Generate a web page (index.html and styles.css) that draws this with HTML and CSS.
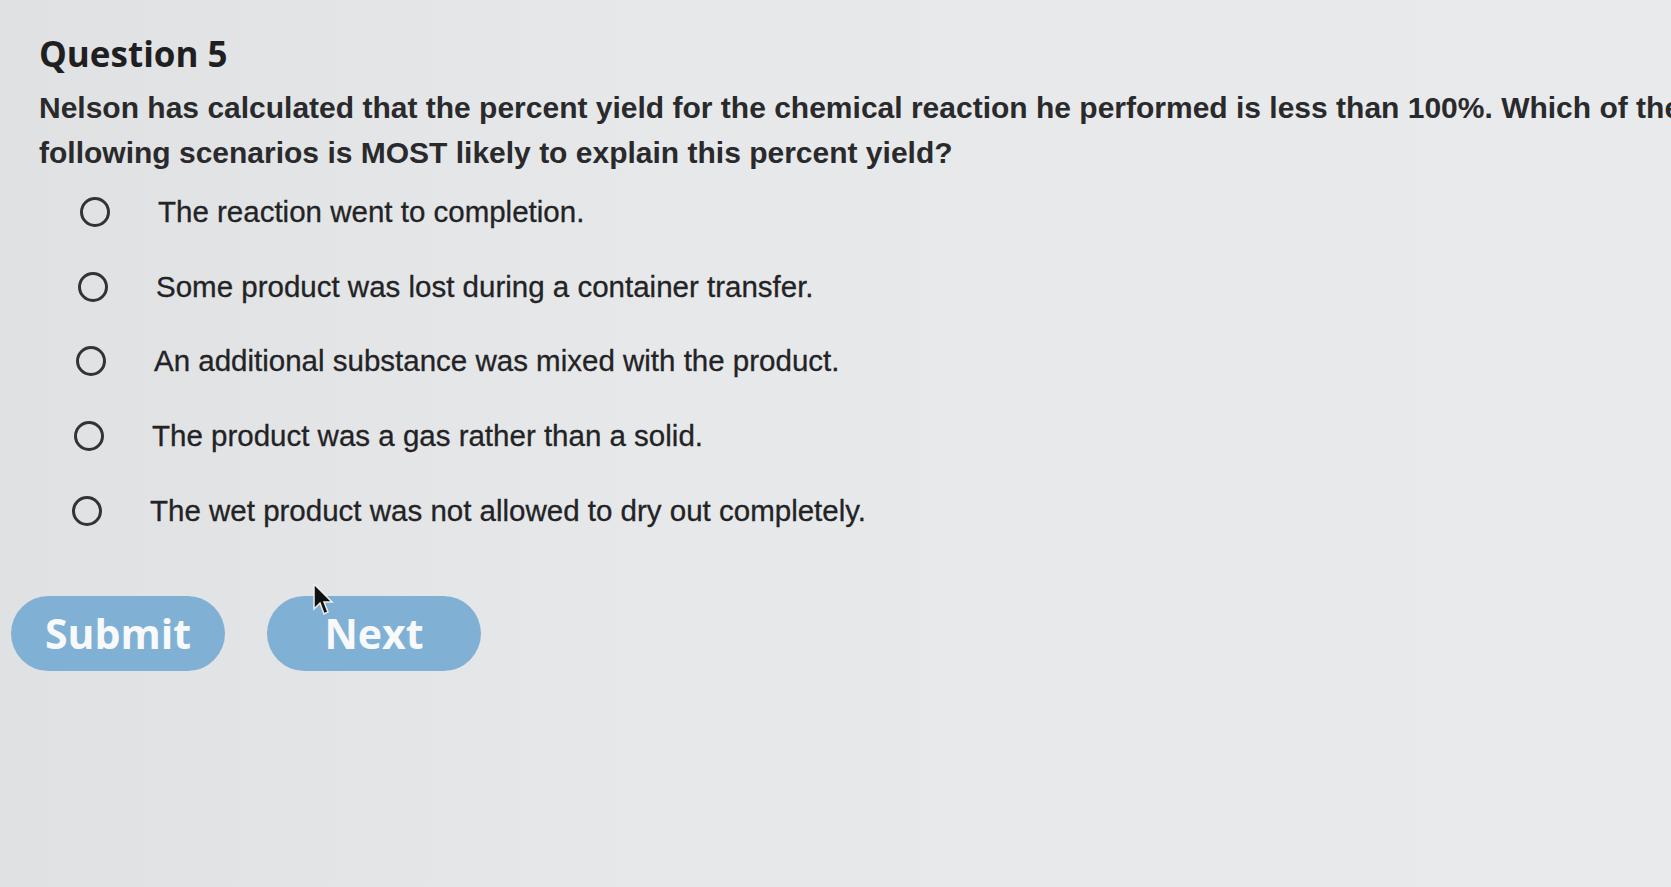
FILE: index.html
```html
<!DOCTYPE html>
<html>
<head>
<meta charset="utf-8">
<link rel="stylesheet" href="styles.css">
</head>
<body>
<main class="page">
  <h1 class="title">Question 5</h1>
  <p class="prompt">
    <span class="line">Nelson has calculated that the percent yield for the chemical reaction he performed is less than 100%. Which of the</span>
    <span class="line">following scenarios is MOST likely to explain this percent yield?</span>
  </p>
  <ul class="options">
    <li class="option o1"><span class="radio"></span><span class="label">The reaction went to completion.</span></li>
    <li class="option o2"><span class="radio"></span><span class="label">Some product was lost during a container transfer.</span></li>
    <li class="option o3"><span class="radio"></span><span class="label">An additional substance was mixed with the product.</span></li>
    <li class="option o4"><span class="radio"></span><span class="label">The product was a gas rather than a solid.</span></li>
    <li class="option o5"><span class="radio"></span><span class="label">The wet product was not allowed to dry out completely.</span></li>
  </ul>
  <div class="actions">
    <button class="btn">Submit</button>
    <button class="btn">Next</button>
    <svg class="cursor" width="22" height="34" viewBox="0 0 22 34"><path d="M2 1 L2 26 L8 20 L12 31 L16 29 L12 19 L20 19 Z" fill="#111" stroke="#eee" stroke-width="1.5"/></svg>
  </div>
</main>
</body>
</html>
```

FILE: styles.css
```css
html, body {
  margin: 0;
  padding: 0;
  width: 1671px;
  height: 887px;
  overflow: hidden;
  background: linear-gradient(90deg, #dfe1e3 0%, #e6e8ea 40%, #e9eaec 100%);
  color: #262628;
}
.page {
  padding: 34px 0 0 39px;
  position: relative;
}
.title {
  font-family: "Open Sans", "Liberation Sans", sans-serif;
  font-weight: 700;
  font-size: 35px;
  line-height: 40px;
  margin: 0 0 11px 0;
  color: #1f1f21;
}
.prompt {
  font-family: "Liberation Sans", Arial, sans-serif;
  font-weight: 700;
  font-size: 30px;
  line-height: 45px;
  margin: 0;
  color: #2a2a2c;
}
.line {
  display: block;
  white-space: nowrap;
}
.options {
  list-style: none;
  margin: 0;
  padding: 0;
}
.option {
  display: flex;
  align-items: center;
  height: 74.6px;
  font-family: "Liberation Sans", Arial, sans-serif;
  font-size: 29.5px;
  color: #232325;
  -webkit-text-stroke: 0.3px #232325;
}
.radio {
  width: 24px;
  height: 24px;
  border: 3px solid #333335;
  border-radius: 50%;
  flex: none;
  margin-right: 48px;
}
.o1 { padding-left: 41px; }
.o2 { padding-left: 39px; }
.o3 { padding-left: 37px; }
.o4 { padding-left: 35px; }
.o5 { padding-left: 33px; }
.actions {
  display: flex;
  gap: 42px;
  margin: 48px 0 0 -28px;
  position: relative;
}
.btn {
  width: 214px;
  height: 75px;
  border: none;
  border-radius: 38px;
  background: #80b1d5;
  color: #f7f9fb;
  font-family: "Open Sans", "Liberation Sans", sans-serif;
  font-weight: 700;
  font-size: 41px;
  padding: 0;
}
.cursor {
  position: absolute;
  left: 301px;
  top: -13px;
}
```
